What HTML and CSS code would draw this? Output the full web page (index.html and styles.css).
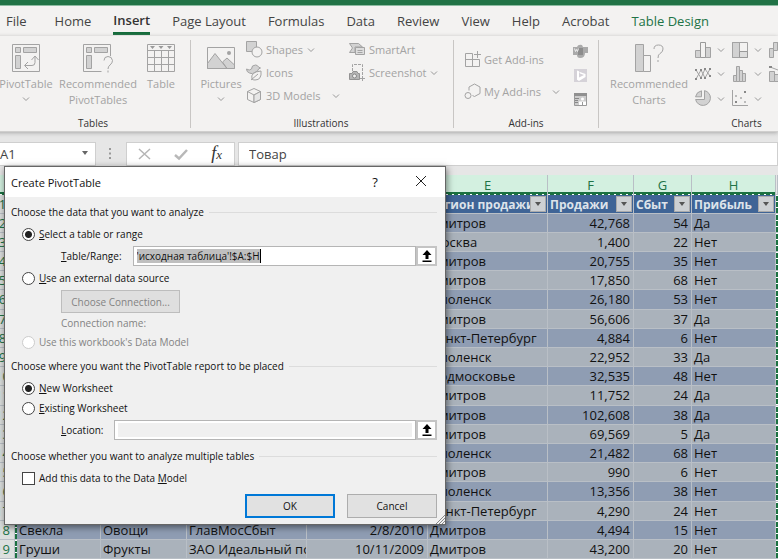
FILE: index.html
```html
<!DOCTYPE html>
<html lang="en">
<head>
<meta charset="utf-8">
<title>Create PivotTable</title>
<link rel="stylesheet" href="styles.css">
</head>
<body>
<svg class="defs" aria-hidden="true">
  <symbol id="chev" viewBox="0 0 8 6"><path d="M1 1.5l3 3 3-3" fill="none" stroke="currentColor"/></symbol>
  <symbol id="up" viewBox="0 0 16 16"><path d="M8 2L3.500 7H6.500v4h3V7h3z" fill="#000"/><path d="M3.500 12.500h9v1.500h-9z" fill="#000"/></symbol>
</svg>
<div class="titlebar"></div>
<nav class="tabs">
  <a href="#" class="file">File</a><a href="#">Home</a><a href="#" class="active">Insert</a><a href="#">Page Layout</a><a href="#">Formulas</a><a href="#">Data</a><a href="#">Review</a><a href="#">View</a><a href="#">Help</a><a href="#">Acrobat</a><a href="#" class="context">Table Design</a>
</nav>
<div class="ribbon">
  <section class="group tables">
    <div class="tools">
      <button class="big pivot" disabled>
        <svg width="30" height="30" viewBox="0 0 30 30"><path class="o" d="M1.500 1.500h27v27h-27z"/><path class="f" d="M4.500 4.500h5v5h-5zM12.500 4.500h13v5h-13zM4.500 12.500h5v13h-5z"/><path class="o" d="M14 22.500h7q3 0 3-3v-6M17 19l-3.500 3.500L17 26M20.500 17l3.500-4 3.500 4"/></svg>
        <span>PivotTable</span><svg class="chev"><use href="#chev"/></svg>
      </button>
      <button class="big rec" disabled>
        <svg width="30" height="30" viewBox="0 0 30 30"><path class="o" d="M27.500 13V1.500h-27v27h18"/><path class="f" d="M3.500 4.500h5v5h-5zM11.500 4.500h13v5h-13zM3.500 12.500h5v13h-5z"/><path class="o" d="M21 17.500q0-4 4-4t4.500 4q0 2.500-2.500 4.500-2 1.500-2 4M25 27.500v2"/></svg>
        <span>Recommended PivotTables</span>
      </button>
      <button class="big tbl" disabled>
        <svg width="30" height="30" viewBox="0 0 30 30"><path class="o" d="M1.500 1.500h27v27h-27zM1.500 7.500h27M1.500 14.500h27M1.500 21.500h27M8.500 7v21M15.500 7v21M22.500 7v21"/><path d="M4 3h5L6.500 6zM12.500 3h5L15 6zM21 3h5l-2.500 3z" fill="#999"/></svg>
        <span>Table</span>
      </button>
    </div>
    <h2>Tables</h2>
  </section>
  <section class="group illus">
    <div class="tools">
      <button class="big pics" disabled>
        <svg width="30" height="30" viewBox="0 0 30 30"><path class="o" d="M1.500 4.500h27v21h-27z"/><path class="f" d="M1.500 20.500L9 10.500l12 15H1.500zM16.500 19l4.500-4 7.500 7v3.500H21z"/><circle cx="23" cy="10" r="2" fill="#a3a3a3"/></svg>
        <span>Pictures</span><svg class="chev"><use href="#chev"/></svg>
      </button>
      <div class="stack">
        <button class="small" disabled><svg width="17" height="17" viewBox="0 0 17 17"><path class="f" d="M.5.5h10v10H.5z"/><circle cx="11" cy="11" r="5" fill="#f3f2f1" stroke="#a3a3a3"/></svg>Shapes<svg class="chev"><use href="#chev"/></svg></button>
        <button class="small" disabled><svg width="17" height="17" viewBox="0 0 17 17"><path class="f" d="M.5 5q3 2 5 0 0-4 4-4 2 0 3 2l2 1-2 1q0 2-3 3-3 3-6 1-3-1-3-4z"/><path d="M6 15q-2-7 9-8 1 9-6 9-2 0-3-1z" fill="#f3f2f1" stroke="#a3a3a3"/><path class="o" d="M5 16l7-6"/></svg>Icons</button>
        <button class="small" disabled><svg width="17" height="17" viewBox="0 0 17 17"><path class="o" d="M8 1.500l6.500 3v8L8 15.500l-6.500-3v-8zM1.500 4.500L8 8l6.500-3.500M8 8v7.500"/><path d="M8 8l6.500-3.500v8L8 15.500z" fill="#e6e6e6" stroke="#a3a3a3"/></svg>3D Models<svg class="chev far"><use href="#chev"/></svg></button>
      </div>
      <div class="stack">
        <button class="small" disabled><svg width="17" height="17" viewBox="0 0 17 17"><path class="f" d="M.5 2.500h9l4 3.500H6v5.500H.5l3-4.500z"/><path d="M6.500 6.500h9v7h-9z" fill="#ddd" stroke="#a3a3a3"/><path class="o" d="M8.500 9.500h5M8.500 11.500h5"/></svg>SmartArt</button>
        <button class="small" disabled><svg width="17" height="17" viewBox="0 0 17 17"><path d="M3.500 7V.5h10V11" fill="none" stroke="#a3a3a3" stroke-dasharray="3 1"/><path d="M.5 9.500H3l1-2h4l1 2h1.500v6H.5z" fill="#b5b5b5" stroke="#929292"/><circle cx="5.500" cy="12" r="2" fill="#eee" stroke="#888"/><path class="o" d="M13.500 12v5M11 14.500h5"/></svg>Screenshot<svg class="chev"><use href="#chev"/></svg></button>
      </div>
    </div>
    <h2>Illustrations</h2>
  </section>
  <section class="group addins">
    <div class="tools">
      <div class="stack wide">
        <button class="small" disabled><svg width="17" height="17" viewBox="0 0 17 17"><path class="o" d="M8.500 2.500h-7v13h14v-7h-14M8.500 2.500v13M13.500 0v7M10 3.500h7"/></svg>Get Add-ins</button>
        <button class="small" disabled><svg width="17" height="17" viewBox="0 0 17 17"><path class="o" d="M5 7.500V4l5.500-3L16 4v6.500l-5.500 3-2-1"/><circle cx="4" cy="12.500" r="3" class="o"/></svg>My Add-ins<svg class="chev far"><use href="#chev"/></svg></button>
      </div>
      <div class="minis">
        <svg width="15" height="15" viewBox="0 0 15 15"><path d="M0 3h4q1-3 5-2l1 2h5v6h-3q0 5-5 5-3 0-3-3H0z" fill="#aaa"/><path d="M5 4h5v7H5z" fill="#8c8c8c"/><path d="M1.500 4.500l1 3 1-2 1 2 1-3" fill="none" stroke="#eee"/></svg>
        <svg width="15" height="15" viewBox="0 0 15 15"><path d="M1 1h13v13H1z" fill="#d5d2d8"/><path d="M4 2.500l2 .7v6.300L11 7 7 5.500l-.8-1.700L12.500 6v3L6 13l-2-1.200z" fill="#fff"/></svg>
        <svg width="15" height="15" viewBox="0 0 15 15"><path d="M1.500 1.500h12v12h-12z" fill="#ccc" stroke="#999"/><path d="M1 1h13v3H1z" fill="#909090"/><path d="M2 6.500h4M2 8.500h3M2 10.500h3" stroke="#888"/><circle cx="9.500" cy="7" r="1.500" fill="#fff"/><path d="M6 13V9.500h7V13z" fill="#fff"/><path d="M9 10h1v3H9z" fill="#999"/></svg>
      </div>
    </div>
    <h2>Add-ins</h2>
  </section>
  <section class="group charts">
    <div class="tools">
      <button class="big rec" disabled>
        <svg width="30" height="30" viewBox="0 0 30 30"><path class="f" d="M1.500 1.500h8v27h-8z"/><path d="M9.500 12.500h7v16h-7z" fill="#f3f2f1" stroke="#a3a3a3"/><path class="o" d="M20 6q0-4 4.500-4T29 6q0 3-3 4.500-2 1-2 4.500M24 17v2"/></svg>
        <span>Recommended Charts</span>
      </button>
      <div class="chartgrid">
        <svg width="17" height="17" viewBox="0 0 17 17"><path class="f" d="M.5 8.500h5v7h-5zM10.500 5.500h5v10h-5z"/><path d="M5.500.5h5v15h-5z" fill="#f3f2f1" stroke="#999"/></svg><svg class="chev"><use href="#chev"/></svg>
        <svg width="17" height="17" viewBox="0 0 17 17"><path class="f" d="M.5.5h7v15h-7z"/><path class="o" d="M.5.5h15v15H.5zM7.500 9.500h8"/><path d="M7.500 9.500h8v6h-8z" fill="#ddd" stroke="#999"/></svg><svg class="chev"><use href="#chev"/></svg>
        <svg width="17" height="17" viewBox="0 0 17 17"><path class="f" d="M.5 6.500h4v9h-4zM4.500.5h4v8h-4zM8.500.5h4v6h-4z"/></svg><svg class="chev"><use href="#chev"/></svg>
        <svg width="17" height="17" viewBox="0 0 17 17"><path class="o" d="M1 13l5-9 4 8 5-9M1 4l5 8 4-9 5 7"/><path d="M0 3h2v2H0zM5 3h2v2H5zM0 12h2v2H0zM9 2h2v2H9zM14 2h2v2h-2zM14 9h2v2h-2zM9 11h2v2H9zM5 11h2v2H5z" fill="#888"/></svg><svg class="chev"><use href="#chev"/></svg>
        <svg width="17" height="17" viewBox="0 0 17 17"><path class="f" d="M1.500 9.500h3v6h-3zM4.500.5h3v15h-3zM7.500 4.500h3v11h-3zM10.500 7.500h3v8h-3z"/></svg><svg class="chev"><use href="#chev"/></svg>
        <svg width="17" height="17" viewBox="0 0 17 17"><path class="f" d="M.5 5.500h5v10h-5zM5.500 8.500h5v7h-5z"/><path class="o" d="M1 1l8 3 4-2"/><path d="M0 0h3v2H0z" fill="#888"/></svg><svg class="chev"><use href="#chev"/></svg>
        <svg width="17" height="17" viewBox="0 0 17 17"><path class="f" d="M9.500.6A7.500 7.500 0 1 1 .6 9.500h8.900z"/><path class="f" d="M6.500.8v6h-6q1-5 6-6z"/></svg><svg class="chev"><use href="#chev"/></svg>
        <svg width="17" height="17" viewBox="0 0 17 17"><path class="o" d="M.5 0v15.500H16"/><path d="M3 11h2v2H3zM12 1h2v2h-2z" fill="#888"/><path d="M3 5h2v2H3zM8 7h2v2H8zM12 11h2v2h-2z" fill="#bbb"/></svg><svg class="chev"><use href="#chev"/></svg>
      </div>
    </div>
    <h2>Charts</h2>
  </section>
</div>
<div class="formulabar">
  <div class="namebox"><span>A1</span><svg width="8" height="5" viewBox="0 0 8 5"><path d="M1 0h6L4 4z" fill="#666"/></svg></div>
  <svg class="dots" width="4" height="13" viewBox="0 0 4 13"><path d="M1 1h2v2H1zM1 5.500h2v2H1zM1 10h2v2H1z" fill="#999"/></svg>
  <div class="fx">
    <svg width="14" height="14" viewBox="0 0 14 14"><path d="M2 2l11 10M13 2L2 12" stroke="#b5b5b5" stroke-width="1.500"/></svg>
    <svg width="14" height="14" viewBox="0 0 14 14"><path d="M1 8l4 3.500L13 3" stroke="#b8b8b8" stroke-width="2.500" fill="none"/></svg>
    <i>f<small>x</small></i>
  </div>
  <input class="formula" aria-label="Formula" value="Товар">
</div>
<main class="sheet">
<table>
  <colgroup><col class="n"><col class="a"><col class="a"><col class="c"><col class="d"><col class="c"><col class="a"><col class="g"><col class="h"><col></colgroup>
  <thead>
    <tr class="letters"><th></th><th>A</th><th>B</th><th>C</th><th>D</th><th>E</th><th>F</th><th>G</th><th>H</th><td></td></tr>
    <tr class="names"><th>1</th><td></td><td></td><td></td><td></td>
      <td><div><span>Регион продажи</span><button aria-label="Filter"></button></div></td>
      <td><div><span>Продажи</span><button aria-label="Filter"></button></div></td>
      <td><div><span>Сбыт</span><button aria-label="Filter"></button></div></td>
      <td><div><span>Прибыль</span><button aria-label="Filter"></button></div></td><td></td></tr>
  </thead>
  <tbody>
    <tr><th>2</th><td></td><td></td><td></td><td></td><td>Дмитров</td><td>42,768</td><td>54</td><td>Да</td><td></td></tr>
    <tr><th>3</th><td></td><td></td><td></td><td></td><td>Москва</td><td>1,400</td><td>22</td><td>Нет</td><td></td></tr>
    <tr><th>4</th><td></td><td></td><td></td><td></td><td>Дмитров</td><td>20,755</td><td>35</td><td>Нет</td><td></td></tr>
    <tr><th>5</th><td></td><td></td><td></td><td></td><td>Дмитров</td><td>17,850</td><td>68</td><td>Нет</td><td></td></tr>
    <tr><th>6</th><td></td><td></td><td></td><td></td><td>Смоленск</td><td>26,180</td><td>53</td><td>Нет</td><td></td></tr>
    <tr><th>7</th><td></td><td></td><td></td><td></td><td>Дмитров</td><td>56,606</td><td>37</td><td>Да</td><td></td></tr>
    <tr><th>8</th><td></td><td></td><td></td><td></td><td>Санкт-Петербург</td><td>4,884</td><td>6</td><td>Нет</td><td></td></tr>
    <tr><th>9</th><td></td><td></td><td></td><td></td><td>Смоленск</td><td>22,952</td><td>33</td><td>Да</td><td></td></tr>
    <tr><th>10</th><td></td><td></td><td></td><td></td><td>Подмосковье</td><td>32,535</td><td>48</td><td>Нет</td><td></td></tr>
    <tr><th>11</th><td></td><td></td><td></td><td></td><td>Дмитров</td><td>11,752</td><td>24</td><td>Да</td><td></td></tr>
    <tr><th>12</th><td></td><td></td><td></td><td></td><td>Дмитров</td><td>102,608</td><td>38</td><td>Да</td><td></td></tr>
    <tr><th>13</th><td></td><td></td><td></td><td></td><td>Дмитров</td><td>69,569</td><td>5</td><td>Да</td><td></td></tr>
    <tr><th>14</th><td></td><td></td><td></td><td></td><td>Смоленск</td><td>21,482</td><td>68</td><td>Нет</td><td></td></tr>
    <tr><th>15</th><td></td><td></td><td></td><td></td><td>Дмитров</td><td>990</td><td>6</td><td>Нет</td><td></td></tr>
    <tr><th>16</th><td></td><td></td><td></td><td></td><td>Смоленск</td><td>13,356</td><td>38</td><td>Нет</td><td></td></tr>
    <tr><th>17</th><td></td><td></td><td></td><td></td><td>Санкт-Петербург</td><td>4,290</td><td>24</td><td>Нет</td><td></td></tr>
    <tr><th>18</th><td>Свекла</td><td>Овощи</td><td>ГлавМосСбыт</td><td>2/8/2010</td><td>Дмитров</td><td>4,494</td><td>15</td><td>Нет</td><td></td></tr>
    <tr><th>19</th><td>Груши</td><td>Фрукты</td><td>ЗАО Идеальный поставщик</td><td>10/11/2009</td><td>Дмитров</td><td>43,200</td><td>20</td><td>Нет</td><td></td></tr>
  </tbody>
</table>
</main>
<form class="dialog" role="dialog" aria-labelledby="dlg-title">
  <header>
    <h1 id="dlg-title">Create PivotTable</h1>
    <button type="button" aria-label="Help">?</button>
    <button type="button" aria-label="Close"><svg width="12" height="12" viewBox="0 0 12 12"><path d="M1 1l10 10M11 1L1 11" stroke="#222" fill="none"/></svg></button>
  </header>
  <div class="body">
    <section>
      <h3>Choose the data that you want to analyze</h3>
      <label class="opt"><input type="radio" name="src" checked><span><u>S</u>elect a table or range</span></label>
      <div class="field"><label for="range"><u>T</u>able/Range:</label><div class="box"><input id="range" class="selected" value="'исходная таблица'!$A:$H"></div><button type="button" class="pick" aria-label="Collapse dialog"><svg width="16" height="16"><use href="#up"/></svg></button></div>
      <label class="opt"><input type="radio" name="src"><span><u>U</u>se an external data source</span></label>
      <div class="conn"><button type="button" disabled>Choose Connection...</button><p>Connection name:</p></div>
      <label class="opt off"><input type="radio" name="src" disabled><span>Use this workbook's Data Model</span></label>
    </section>
    <section>
      <h3>Choose where you want the PivotTable report to be placed</h3>
      <label class="opt"><input type="radio" name="dest" checked><span><u>N</u>ew Worksheet</span></label>
      <label class="opt"><input type="radio" name="dest"><span><u>E</u>xisting Worksheet</span></label>
      <div class="field"><label for="loc"><u>L</u>ocation:</label><div class="box"><input id="loc" class="empty"></div><button type="button" class="pick" aria-label="Collapse dialog"><svg width="16" height="16"><use href="#up"/></svg></button></div>
    </section>
    <section>
      <h3>Choose whether you want to analyze multiple tables</h3>
      <label class="opt"><input type="checkbox"><span>Add this data to the Data <u>M</u>odel</span></label>
    </section>
    <footer><button type="button" class="ok">OK</button><button type="button">Cancel</button></footer>
  </div>
  <svg class="grip" width="9" height="9" viewBox="0 0 9 9"><path d="M0 9L9 0M3 9l6-6M6 9l3-3" stroke="#888"/></svg>
</form>
</body>
</html>
```
FILE: styles.css
```css
* { box-sizing: border-box; }
html, body { height: 100%; }
body {
  margin: 0;
  overflow: hidden;
  display: flex;
  flex-direction: column;
  background: #e6e6e6;
  font-family: "Open Sans", "Noto Sans", sans-serif;
  font-size: 11px;
  color: #444;
}
h1, h2, h3, p { margin: 0; font-weight: 400; }
button, input { font: inherit; color: inherit; margin: 0; }
svg { flex: none; }
.defs { position: absolute; width: 0; height: 0; }
.o { fill: none; stroke: #a3a3a3; }
.f { fill: #d2d2d2; stroke: #a3a3a3; }
.chev { width: 8px; height: 6px; color: #999; }

.titlebar { flex: none; height: 6px; background: #217346; border-bottom: 1px solid #8dbba2; }
.tabs { flex: none; display: flex; gap: 22px; height: 30px; padding: 3px 6px 0; background: #f3f2f1; font-size: 13px; line-height: 24px; white-space: nowrap; }
.tabs a { color: #444; text-decoration: none; }
.tabs .file { margin-right: 6px; }
.tabs .active { font-weight: 600; color: #333; height: 26px; line-height: 23px; border-bottom: 3px solid #136b3a; }
.tabs .context { color: #217346; }

.ribbon { flex: none; display: flex; height: 96px; margin-left: -12px; padding: 4px 0 3px; background: #f3f2f1; border-bottom: 1px solid #d0cfce; box-shadow: 0 1px 4px #aaa; overflow: hidden; color: #a3a3a3; }
.group { flex: none; display: flex; flex-direction: column; justify-content: space-between; border-right: 1px solid #c8c6c4; }
.group h2 { font-size: 10px; line-height: 10px; text-align: center; color: #333; padding-right: 8px; }
.tools { display: flex; }
.tables { width: 203px; padding-left: 8px; }
.tables h2 { padding-right: 0; }
.illus { width: 263px; padding-left: 6px; }
.addins { width: 145px; padding-left: 10px; }
.addins h2 { padding-right: 10px; }
.charts { width: 296px; padding-left: 8px; }
.ribbon button { border: 0; padding: 0; background: none; color: inherit; line-height: 16px; white-space: nowrap; }
.ribbon .big { display: flex; flex-direction: column; align-items: center; padding-top: 3px; white-space: normal; }
.big > svg:first-child { height: 30px; margin-bottom: 3px; }
.big .chev { margin-top: 4px; }
.pivot { width: 60px; }
.rec { width: 84px; }
.tbl { width: 42px; }
.pics { width: 48px; }
.stack { display: flex; flex-direction: column; gap: 6px; padding-top: 1px; margin-left: 1px; width: 102px; }
.small { display: flex; align-items: center; gap: 3px; height: 17px; }
.small .chev { margin-left: 1px; }
.small .far { margin-left: 8px; }
.wide { gap: 15px; padding-top: 11px; width: 109px; margin-left: 0; }
.minis { display: flex; flex-direction: column; gap: 9px; padding-top: 4px; }
.chartgrid { display: grid; grid-template-columns: repeat(3, 17px 10px); column-gap: 5px; row-gap: 6px; align-items: center; padding-top: 1px; margin-left: 4px; }

.formulabar { flex: none; display: flex; align-items: center; height: 43px; font-size: 13px; }
.formulabar > * { height: 24px; background: #fff; border: 1px solid #cfcfcf; }
.namebox { display: flex; align-items: center; justify-content: space-between; width: 96px; border-left: 0; padding-right: 6px; }
.formulabar .dots { height: 13px; margin: 0 14px 0 12px; background: none; border: 0; }
.fx { display: flex; align-items: center; justify-content: space-between; width: 109px; padding: 0 12px 0 10px; margin-right: 3px; }
.fx i { font: italic 18px/20px "Liberation Serif", serif; color: #333; }
.fx small { font-size: 13px; }
.formula { flex: 1; min-width: 0; padding: 0 10px; border-radius: 0; }

.sheet { flex: 1; min-height: 0; overflow: hidden; margin-left: -12px; background: #e6e6e6; color: #111; font-size: 13px; }
table { table-layout: fixed; width: 100%; border-collapse: separate; border-spacing: 0; }
.n { width: 27px; } .a { width: 86px; } .c { width: 120px; } .d { width: 121px; } .g { width: 58px; } .h { width: 84px; }
th, td { height: 19px; padding: 0 3px 0 2px; line-height: 17px; font-weight: 400; text-align: left; white-space: nowrap; overflow: hidden; border-right: 1px solid #b9bfc6; border-bottom: 1px solid #b9bfc6; }
th { padding: 0; text-align: center; color: #217346; background-color: #dcdfde; }
.letters th {
  height: 20px;
  border-bottom: 0;
  background:
    repeating-linear-gradient(90deg, #fff 0 2px, #1b7141 2px 6px) 0 100% / 100% 1px no-repeat,
    linear-gradient(#1b7141, #1b7141) 0 100% / 100% 3px no-repeat #d3f0e0;
}
tr th:first-child { padding-left: 3px; }
tbody tr:nth-child(5n) > * { height: 20px; }
tbody td { background-color: #aab2bb; }
tbody tr:nth-child(odd) td { background-color: #8f9db3; }
tbody td:nth-child(5), tbody td:nth-child(7), tbody td:nth-child(8) { text-align: right; }
.names td { background: #3f6496; color: #dde3ea; font-size: 12px; font-weight: 700; }
.names div { display: flex; justify-content: space-between; align-items: center; margin-right: -2px; }
.names span { overflow: hidden; }
.names button { flex: none; display: grid; place-items: center; width: 16px; height: 16px; padding: 0; border: 1px solid #aaa; background: #cdd0d3; }
.names button::after { content: ""; border: 3px solid transparent; border-top: 4px solid #555; border-bottom: 0; }
tr td:nth-child(2) { padding-left: 4px; background-image: repeating-linear-gradient(#fff 0 1px, #1b7141 1px 6px); background-size: 2px 100%; background-repeat: no-repeat; }
tr.names td:last-child, tbody tr td:last-child { padding: 0; border-right: 0; background: repeating-linear-gradient(#fff 0 1px, #1b7141 1px 6px) 0 0 / 2px 100% no-repeat #e8e8e8; }

.dialog { position: absolute; left: 4px; top: 166px; width: 442px; background: #f0f0f0; border: 1px solid #666; box-shadow: 1px 2px 7px rgba(0, 0, 0, .5); color: #111; font-size: 10px; }
.dialog header { display: flex; align-items: center; height: 30px; padding: 0 1px 0 6px; background: #fff; }
.dialog h1 { flex: 1; font-size: 11px; }
.dialog header button { width: 46px; height: 28px; padding: 0; border: 0; background: none; font-size: 13px; }
.body { display: flex; flex-direction: column; gap: 8px; padding: 7px 8px 6px 6px; line-height: 16px; }
.body section { display: flex; flex-direction: column; gap: 4px; }
h3 { display: flex; align-items: center; gap: 5px; margin-bottom: 2px; font-size: 10px; white-space: nowrap; }
h3::after { content: ""; flex: 1; height: 1px; background: #dcdcdc; }
.opt { display: flex; align-items: center; gap: 4px; height: 16px; padding-left: 11px; }
.opt input { appearance: none; flex: none; width: 13px; height: 13px; border: 1px solid #444; background: #fff; }
.opt input[type="radio"] { border-radius: 50%; }
.opt input:checked { background: radial-gradient(circle, #222 0 3px, #fff 4px); }
.opt.off, .conn { color: #838383; }
.opt.off input { border-color: #ccc; }
.field { display: flex; align-items: center; height: 20px; padding-left: 50px; }
.field label { margin-right: 11px; }
.box { flex: 1; display: flex; align-items: center; height: 20px; padding: 2px 3px; background: #fff; border: 1px solid #b5b5b5; }
.box input { border: 0; padding: 0; outline: 0; line-height: 14px; height: 14px; }
.box .selected { field-sizing: content; background: #bfbfbf; border-right: 1px solid #000; }
.box .empty { flex: 1; background: #f0f0f0; }
.pick { display: grid; place-items: center; width: 21px; height: 20px; padding: 0; background: #fff; border: 2px solid #c4c4c4; }
.conn { display: flex; flex-direction: column; align-items: flex-start; gap: 3px; padding-left: 50px; line-height: 14px; }
.conn button { width: 119px; height: 23px; padding: 0; background: #dfdfdf; border: 1px solid #bdbdbd; }
footer { display: flex; justify-content: flex-end; gap: 12px; }
footer button { width: 90px; height: 24px; padding: 0; background: #e1e1e1; border: 1px solid #adadad; }
footer .ok { border: 2px solid #0078d7; }
.grip { position: absolute; right: 0; bottom: 0; }
```
